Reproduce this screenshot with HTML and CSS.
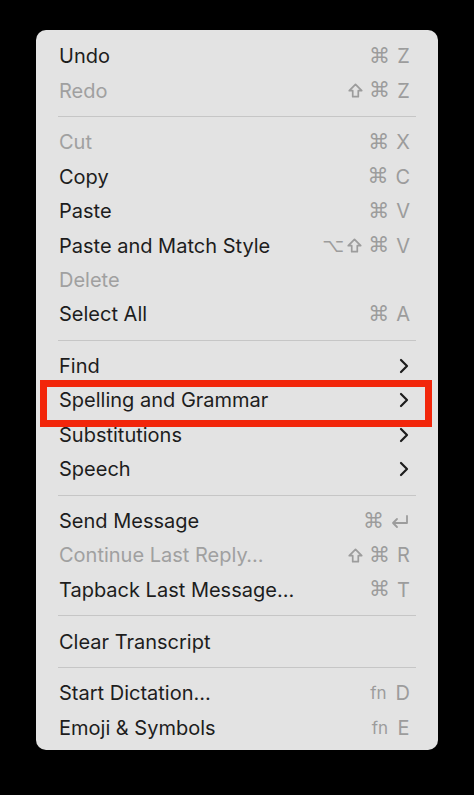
FILE: index.html
```html
<!DOCTYPE html>
<html>
<head>
<meta charset="utf-8">
<link rel="stylesheet" href="styles.css">
</head>
<body>
<div class="menu">
  <div class="row"><span class="label">Undo</span><span class="sc"><span class="mod">⌘</span><span class="key">Z</span></span></div>
  <div class="row dis"><span class="label">Redo</span><span class="sc"><svg class="shift" viewBox="0 0 14 14"><path d="M7 1.2 L12.8 7.2 H9.6 V12.8 H4.4 V7.2 H1.2 Z" fill="none" stroke="#9c9c9c" stroke-width="1.6" stroke-linejoin="round"/></svg><span class="mod">⌘</span><span class="key">Z</span></span></div>
  <div class="sep"></div>
  <div class="row dis"><span class="label">Cut</span><span class="sc"><span class="mod">⌘</span><span class="key">X</span></span></div>
  <div class="row"><span class="label">Copy</span><span class="sc"><span class="mod">⌘</span><span class="key">C</span></span></div>
  <div class="row"><span class="label">Paste</span><span class="sc"><span class="mod">⌘</span><span class="key">V</span></span></div>
  <div class="row"><span class="label">Paste and Match Style</span><span class="sc"><span class="mod opt">⌥</span><svg class="shift" viewBox="0 0 14 14"><path d="M7 1.2 L12.8 7.2 H9.6 V12.8 H4.4 V7.2 H1.2 Z" fill="none" stroke="#9c9c9c" stroke-width="1.6" stroke-linejoin="round"/></svg><span class="mod">⌘</span><span class="key">V</span></span></div>
  <div class="row dis"><span class="label">Delete</span></div>
  <div class="row"><span class="label">Select All</span><span class="sc"><span class="mod">⌘</span><span class="key">A</span></span></div>
  <div class="sep"></div>
  <div class="row"><span class="label">Find</span><svg class="chev" viewBox="0 0 10 16"><path d="M2 2 L8 8 L2 14" fill="none" stroke="#1d1d1d" stroke-width="2.2" stroke-linecap="round" stroke-linejoin="round"/></svg></div>
  <div class="row hl"><span class="label">Spelling and Grammar</span><svg class="chev" viewBox="0 0 10 16"><path d="M2 2 L8 8 L2 14" fill="none" stroke="#1d1d1d" stroke-width="2.2" stroke-linecap="round" stroke-linejoin="round"/></svg><div class="box"></div></div>
  <div class="row"><span class="label">Substitutions</span><svg class="chev" viewBox="0 0 10 16"><path d="M2 2 L8 8 L2 14" fill="none" stroke="#1d1d1d" stroke-width="2.2" stroke-linecap="round" stroke-linejoin="round"/></svg></div>
  <div class="row"><span class="label">Speech</span><svg class="chev" viewBox="0 0 10 16"><path d="M2 2 L8 8 L2 14" fill="none" stroke="#1d1d1d" stroke-width="2.2" stroke-linecap="round" stroke-linejoin="round"/></svg></div>
  <div class="sep"></div>
  <div class="row"><span class="label">Send Message</span><span class="sc"><span class="mod">⌘</span><svg class="ret" viewBox="0 0 20 16"><path d="M17 3 V10 H3 M7 6 L3 10 L7 14" fill="none" stroke="#9c9c9c" stroke-width="1.8" stroke-linecap="round" stroke-linejoin="round"/></svg></span></div>
  <div class="row dis"><span class="label">Continue Last Reply…</span><span class="sc"><svg class="shift" viewBox="0 0 14 14"><path d="M7 1.2 L12.8 7.2 H9.6 V12.8 H4.4 V7.2 H1.2 Z" fill="none" stroke="#9c9c9c" stroke-width="1.6" stroke-linejoin="round"/></svg><span class="mod">⌘</span><span class="key">R</span></span></div>
  <div class="row"><span class="label">Tapback Last Message…</span><span class="sc"><span class="mod">⌘</span><span class="key">T</span></span></div>
  <div class="sep"></div>
  <div class="row"><span class="label">Clear Transcript</span></div>
  <div class="sep"></div>
  <div class="row"><span class="label">Start Dictation…</span><span class="sc"><span class="fn">fn</span><span class="key">D</span></span></div>
  <div class="row"><span class="label">Emoji &amp; Symbols</span><span class="sc"><span class="fn">fn</span><span class="key">E</span></span></div>
</div>
</body>
</html>
```

FILE: styles.css
```css
html, body {
  margin: 0;
  padding: 0;
  background: #000;
}
body {
  width: 474px;
  height: 795px;
  overflow: hidden;
  font-family: Inter, "Liberation Sans", sans-serif;
}
.menu {
  margin: 30px 0 0 36px;
  width: 402px;
  height: 720px;
  box-sizing: border-box;
  background: #e3e3e3;
  border-radius: 10px;
  padding: 9px 0 5px;
  display: flex;
  flex-direction: column;
}
.row {
  position: relative;
  height: 34.4px;
  flex: none;
  display: flex;
  align-items: center;
  justify-content: space-between;
  padding: 0 28px 0 23px;
  color: #1d1d1d;
  font-size: 20px;
}
.row.dis .label { color: #a0a0a0; }
.sep {
  flex: none;
  height: 17.4px;
  display: flex;
  align-items: center;
  padding: 0 22px;
}
.sep::before {
  content: "";
  display: block;
  width: 100%;
  height: 1px;
  background: #c6c6c6;
}
.sc {
  display: flex;
  align-items: center;
  color: #9c9c9c;
}
.mod {
  font-family: "DejaVu Sans", sans-serif;
  font-size: 21px;
  line-height: 1;
  margin-right: 2px;
}
.mod.opt {
  font-size: 19px;
  margin-right: 3px;
}
.shift {
  width: 15px;
  height: 15px;
  margin-right: 6px;
}
.key {
  margin-left: 5px;
  font-size: 20px;
  min-width: 13px;
  text-align: center;
}
.fn {
  font-size: 17px;
  margin-right: 4px;
}
.ret {
  width: 20px;
  height: 16px;
  margin-left: 4px;
}
.chev {
  width: 10px;
  height: 16px;
  margin-right: 1px;
}
.box {
  position: absolute;
  left: 4px;
  right: 6px;
  top: -3px;
  bottom: -9px;
  border: 7px solid #f2260b;
}
```
